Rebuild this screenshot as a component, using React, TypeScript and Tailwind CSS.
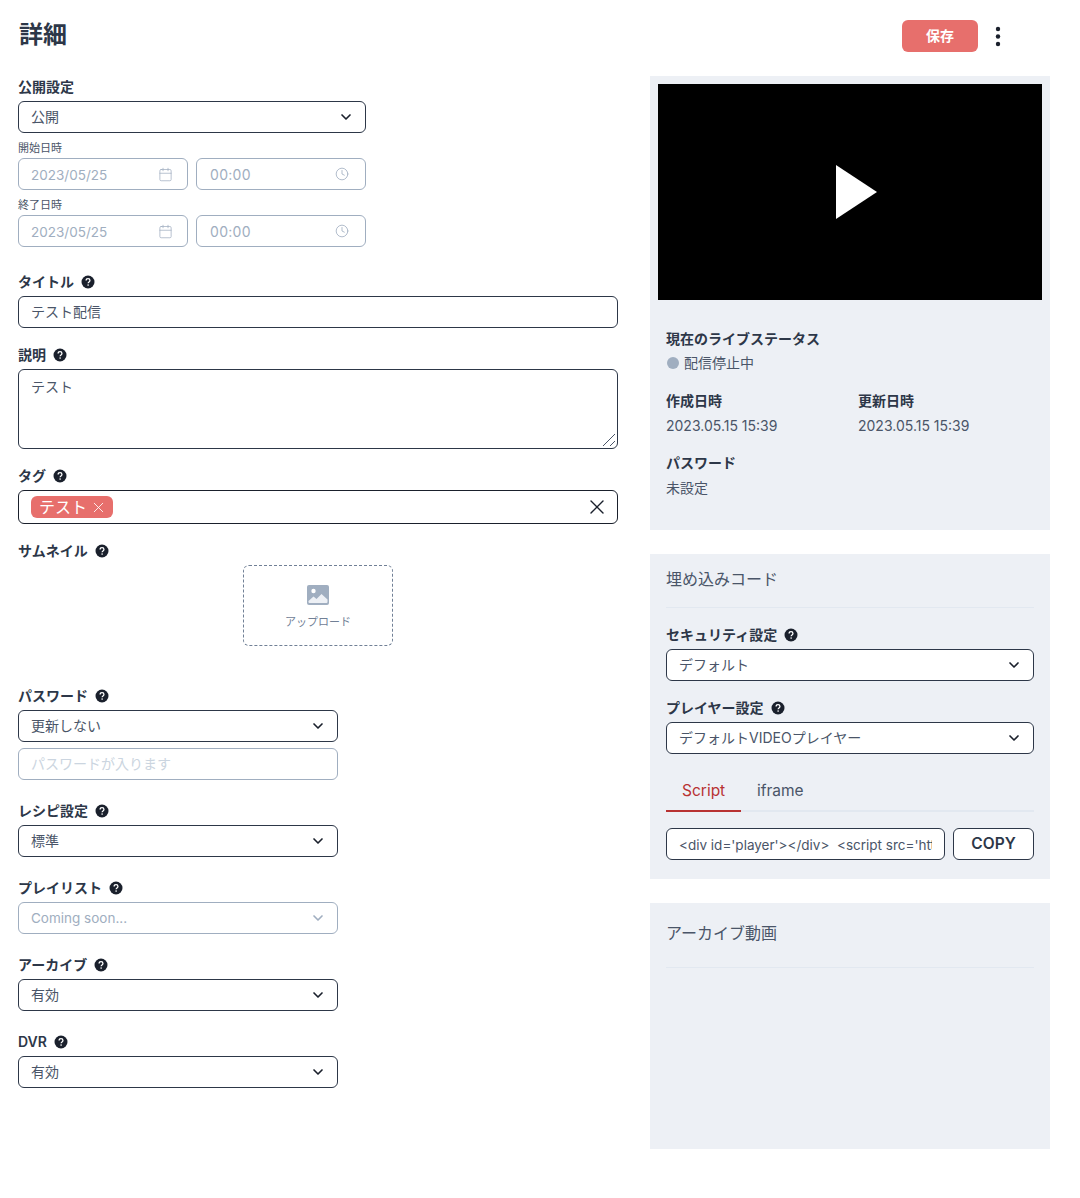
import type { ReactNode } from 'react'
import { Calendar, ChevronDown, Clock, X } from 'lucide-react'

const FONT = "font-['Inter','Noto_Sans_CJK_JP',sans-serif]"

function Help() {
  return (
    <svg width="14" height="14" viewBox="0 0 14 14" className="ml-[7px] shrink-0" aria-hidden="true">
      <circle cx="7" cy="7" r="6.5" fill="#1a202c" />
      <path d="M5.1 5.5c0-1.1.9-1.8 1.95-1.8s1.9.7 1.9 1.7c0 1.5-1.85 1.5-1.85 2.8" fill="none" stroke="#fff" strokeWidth="1.3" />
      <circle cx="7.1" cy="10.1" r=".8" fill="#fff" />
    </svg>
  )
}

function Label({ children, help = true, className = '' }: { children: ReactNode; help?: boolean; className?: string }) {
  return (
    <div className={`mb-1 flex h-5 items-center text-sm font-semibold leading-5 text-[#2d3748] ${className}`}>
      {children}
      {help && <Help />}
    </div>
  )
}

function Select({ value, disabled = false, className = '' }: { value: string; disabled?: boolean; className?: string }) {
  return (
    <div className={`relative ${className}`}>
      <select
        disabled={disabled}
        defaultValue={value}
        className={`h-8 w-full appearance-none rounded-md border bg-white pb-px pl-3 pr-8 leading-5 outline-none ${
          disabled ? 'border-[#a0aec0] text-[13.5px] text-[#a0aec0]' : 'border-[#2d3748] text-sm text-[#4a5568]'
        }`}
      >
        <option>{value}</option>
      </select>
      <ChevronDown
        size={16}
        strokeWidth={2.5}
        className={`pointer-events-none absolute right-3 top-2 ${disabled ? 'text-[#a0aec0]' : 'text-[#1a202c]'}`}
      />
    </div>
  )
}

function DateBox({ value, icon }: { value: string; icon: 'date' | 'time' }) {
  return (
    <div className="flex h-8 w-[170px] items-center justify-between rounded-md border border-[#a0aec0] pl-3 text-[#a0aec0]">
      {icon === 'date' ? (
        <>
          <span className="pt-0.5 text-[13.5px]">{value}</span>
          <Calendar size={15} strokeWidth={1.2} className="mr-[14px] text-[#a0aec0]" />
        </>
      ) : (
        <>
          <span className="pl-px pt-0.5 text-sm tracking-[0.3px]">{value}</span>
          <Clock size={14} strokeWidth={1.4} className="mr-4 text-[#a0aec0]" />
        </>
      )}
    </div>
  )
}

function DateRow({ label, className = '' }: { label: string; className?: string }) {
  return (
    <div className={className}>
      <div className="mb-0.5 h-4 text-[11px] leading-4 text-[#4a5568]">{label}</div>
      <div className="flex gap-2">
        <DateBox value="2023/05/25" icon="date" />
        <DateBox value="00:00" icon="time" />
      </div>
    </div>
  )
}

const inputCls = 'h-8 w-full rounded-md border border-[#2d3748] bg-white pb-0.5 px-3 text-sm text-[#4a5568] outline-none'

export default function App() {
  return (
    <div className={`${FONT} flex h-[1198px] w-[1080px] bg-white pl-[18px] pt-5`}>
      <main className="w-[600px]">
        <h1 className="mb-[25px] ml-px h-8 pt-px text-2xl font-bold leading-7 text-[#2d3748]">詳細</h1>

        <Label help={false}>公開設定</Label>
        <Select value="公開" className="w-[348px]" />
        <DateRow label="開始日時" className="mt-[7px]" />
        <DateRow label="終了日時" className="mt-[7px]" />

        <Label className="mt-[25px]">タイトル</Label>
        <input readOnly value="テスト配信" className={inputCls} />

        <Label className="mt-[17px]">説明</Label>
        <div className="relative">
          <textarea
            readOnly
            value="テスト"
            className="block h-20 w-full resize-none rounded-md border border-[#2d3748] bg-white px-3 py-[7px] text-sm text-[#4a5568] outline-none"
          />
          <svg width="14" height="14" viewBox="0 0 14 14" className="pointer-events-none absolute bottom-0.5 right-0.5 text-[#4a5568]" aria-hidden="true">
            <path d="M1 13L13 1M8 13l5-5" fill="none" stroke="currentColor" strokeWidth="1" />
          </svg>
        </div>

        <Label className="mt-[17px]">タグ</Label>
        <div className="flex h-[34px] items-center justify-between rounded-md border border-[#1a202c] pl-3 pr-2">
          <span className="flex h-[22px] w-[82px] items-center gap-[3px] rounded-md bg-[#e76f6c] pl-2 text-base text-white">
            テスト
            <X size={17} strokeWidth={1.2} />
          </span>
          <X size={24} strokeWidth={1.4} className="text-[#1a202c]" />
        </div>

        <Label className="mt-[17px]">サムネイル</Label>
        <div className="mx-auto flex h-[81px] w-[150px] flex-col items-center justify-center rounded-md border border-dashed border-[#718096]">
          <svg width="24" height="22" viewBox="0 0 24 22" aria-hidden="true" className="mt-0.5">
            <rect x="1" y="1" width="22" height="20" rx="2" fill="#a0aec0" />
            <circle cx="7.5" cy="7" r="2.2" fill="#fff" />
            <path d="M2.5 17l5-4.5 3 2.5 5-5 6 5.5v2.5a1 1 0 0 1-1 1h-17a1 1 0 0 1-1-1z" fill="#edf0f5" />
          </svg>
          <span className="mt-[8px] text-[11px] leading-4 text-[#718096]">アップロード</span>
        </div>

        <Label className="mt-10">パスワード</Label>
        <div className="w-80">
          <Select value="更新しない" />
          <input
            readOnly
            placeholder="パスワードが入ります"
            className="mt-1.5 h-8 w-full rounded-md border border-[#a0aec0] bg-white px-3 pb-0.5 text-sm outline-none placeholder:text-[#cbd5e0]"
          />
          <Label className="mt-[21px]">レシピ設定</Label>
          <Select value="標準" />
          <Label className="mt-[21px]">プレイリスト</Label>
          <Select value="Coming soon..." disabled />
          <Label className="mt-[21px]">アーカイブ</Label>
          <Select value="有効" />
          <Label className="mt-[21px]">DVR</Label>
          <Select value="有効" />
        </div>
      </main>

      <aside className="ml-8 w-[400px]">
        <div className="flex h-8 items-center justify-end">
          <button className="h-8 w-[76px] rounded-md bg-[#e76f6c] text-sm font-semibold text-white">保存</button>
          <svg width="6" height="22" viewBox="0 0 6 22" className="ml-[17px] mr-[49px] text-[#1a202c]" aria-hidden="true">
            <circle cx="3" cy="4" r="2.2" fill="currentColor" />
            <circle cx="3" cy="11.5" r="2.2" fill="currentColor" />
            <circle cx="3" cy="19" r="2.2" fill="currentColor" />
          </svg>
        </div>

        <section className="mt-6 h-[454px] bg-[#edf0f5] p-2">
          <div className="flex h-[216px] items-center justify-center bg-black">
            <svg width="54" height="54" viewBox="0 0 54 54" aria-hidden="true">
              <polygon points="13,0 54,27 13,54" fill="#fff" />
            </svg>
          </div>
          <div className="px-2 pt-[29px]">
            <div className="mb-[5px] h-5 text-sm font-semibold leading-5 text-[#2d3748]">現在のライブステータス</div>
            <div className="flex h-5 items-center gap-[5px] pb-0.5 pl-px text-sm text-[#4a5568]">
              <span className="h-3 w-3 rounded-full bg-[#a0aec0]" />
              配信停止中
            </div>
            <div className="mt-[17px] grid grid-cols-[192px_1fr]">
              <div>
                <div className="mb-[5px] h-5 text-sm font-semibold leading-5 text-[#2d3748]">作成日時</div>
                <div className="h-5 text-sm leading-5 text-[#4a5568]">2023.05.15 15:39</div>
              </div>
              <div>
                <div className="mb-[5px] h-5 text-sm font-semibold leading-5 text-[#2d3748]">更新日時</div>
                <div className="h-5 text-sm leading-5 text-[#4a5568]">2023.05.15 15:39</div>
              </div>
            </div>
            <div className="mb-[5px] mt-[17px] h-5 text-sm font-semibold leading-5 text-[#2d3748]">パスワード</div>
            <div className="h-5 text-sm leading-5 text-[#4a5568]">未設定</div>
          </div>
        </section>

        <section className="mt-6 h-[325px] bg-[#edf0f5] px-4 pt-3">
          <h2 className="h-[42px] border-b border-[#e2e8f0] pt-px text-base leading-6 text-[#4a5568]">埋め込みコード</h2>
          <Label className="mt-[17px]">セキュリティ設定</Label>
          <Select value="デフォルト" />
          <Label className="mt-[17px]">プレイヤー設定</Label>
          <Select value="デフォルトVIDEOプレイヤー" />
          <div className="mt-4 flex h-[42px] border-b-2 border-[#e2e8f0] text-[15.5px] leading-6">
            <span className="-mb-0.5 w-[75px] border-b-2 border-[#b83232] pl-4 pt-[9px] text-[#b83232]">Script</span>
            <span className="px-4 pt-[9px] text-[#4a5568]">iframe</span>
          </div>
          <div className="mt-4 flex gap-2">
            <input
              readOnly
              value="<div id='player'></div>  <script src='https://player.example.com/embed.js'></script>"
              className="h-8 w-[279px] rounded-md border border-[#2d3748] bg-white px-3 pt-px text-[13.5px] text-[#4a5568] outline-none"
            />
            <button className="h-8 w-[81px] rounded-md border border-[#2d3748] bg-white text-[15.5px] font-semibold text-[#2d3748]">COPY</button>
          </div>
        </section>

        <section className="mt-6 h-[246px] bg-[#edf0f5] px-4 pt-4">
          <h2 className="h-[49px] border-b border-[#e2e8f0] pt-0.5 text-base leading-6 text-[#4a5568]">アーカイブ動画</h2>
        </section>
      </aside>
    </div>
  )
}
